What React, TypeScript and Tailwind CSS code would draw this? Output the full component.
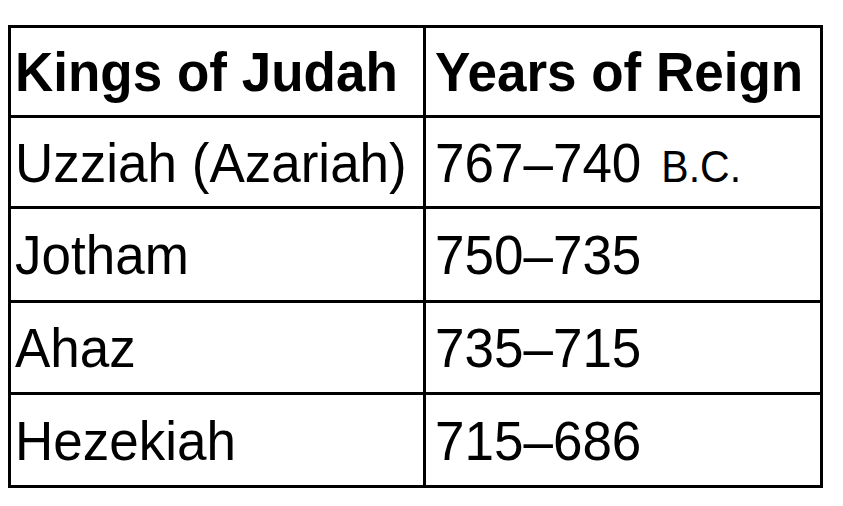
import React from "react";

const rows: { name: string; years: string; bc?: boolean; h: string; last?: boolean }[] = [
  { name: "Uzziah (Azariah)", years: "767–740", bc: true, h: "h-[91px]" },
  { name: "Jotham", years: "750–735", h: "h-[94px]" },
  { name: "Ahaz", years: "735–715", h: "h-[92px]" },
  { name: "Hezekiah", years: "715–686", h: "h-[90px]", last: true },
];

export default function App() {
  return (
    <div className="w-[843px] h-[506px] bg-white pt-[25px] pl-[8px] overflow-hidden text-black" style={{ fontFamily: '"Liberation Sans", Arial, sans-serif' }}>
      <div className="w-[815px] border-[3px] border-black flex flex-col">
        <div className="flex h-[90px] border-b-[3px] border-black">
          <div className="w-[415px] border-r-[3px] border-black flex items-center pl-[4px]">
            <span className="inline-block text-[53px] leading-none font-bold scale-y-[1.06] whitespace-nowrap">Kings of Judah</span>
          </div>
          <div className="flex-1 flex items-center pl-[9px]">
            <span className="inline-block text-[53px] leading-none font-bold scale-y-[1.06] whitespace-nowrap">Years of Reign</span>
          </div>
        </div>
        {rows.map((r) => (
          <div
            key={r.name}
            className={`flex ${r.h} ${r.last ? "" : "border-b-[3px] border-black"}`}
          >
            <div className="w-[415px] border-r-[3px] border-black flex items-center pl-[4px]">
              <span className="inline-block text-[53px] leading-none scale-y-[1.06] whitespace-nowrap">{r.name}</span>
            </div>
            <div className="flex-1 flex items-center pl-[9px]">
              <span className="inline-block text-[53px] leading-none scale-y-[1.06] whitespace-nowrap">
                {r.years}
                {r.bc ? <span className="text-[41px] ml-[20px]">B.C.</span> : null}
              </span>
            </div>
          </div>
        ))}
      </div>
    </div>
  );
}
